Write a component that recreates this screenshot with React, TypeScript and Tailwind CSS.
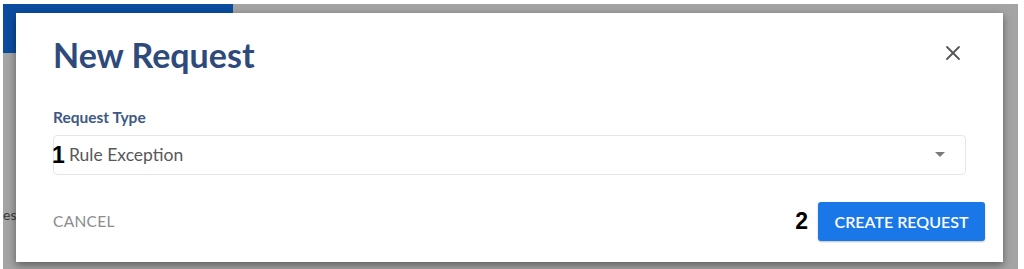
import React from "react";

const lato = { fontFamily: "Lato, 'Open Sans', sans-serif" };
const marker = { fontFamily: "'Liberation Sans', Arial, sans-serif" };

export default function App() {
  return (
    <div className="relative w-[1024px] h-[269px] bg-white pl-[3px] pt-[4px] pr-[6px] overflow-hidden" style={lato}>
      {/* page behind the modal */}
      <div className="flex h-full flex-col bg-[#a4a4a4]">
        <div className="h-[49px] w-[230px] bg-[#0b4ca0]" />
        <div className="mt-[154px] text-[14px] leading-[16px] text-[#3a3a3a]">est</div>
      </div>

      {/* modal */}
      <div className="absolute left-[16px] top-[13px] flex h-[249px] w-[987px] flex-col bg-white pl-[37px] pr-[18px] shadow-[0_3px_8px_rgba(0,0,0,0.45)]">
        <div className="flex items-start justify-between pt-[21px]">
          <h2 className="text-[34px] font-bold leading-[42px] text-[#2d4a7b]">New Request</h2>
          <button className="mr-[24px] mt-[11px] text-[#555]">
            <svg width="16" height="16" viewBox="0 0 16 16" fill="none" stroke="currentColor" strokeWidth="1.8" strokeLinecap="round">
              <path d="M2 2l12 12M14 2L2 14" />
            </svg>
          </button>
        </div>

        <label className="mt-[31px] text-[15.5px] font-bold leading-[20px] text-[#3e5883]">Request Type</label>
        <div className="relative mr-[19px] mt-[8px] flex h-[40px] items-center rounded-[4px] border border-[#e6e6e6] pl-[15px] pr-[20px]">
          <span className="absolute -left-[2px] top-[8px] text-[23px] font-black leading-[23px] text-black" style={marker}>1</span>
          <span className="flex-1 text-[17.5px] text-[#585858]">Rule Exception</span>
          <svg width="10" height="6" viewBox="0 0 10 6">
            <path d="M0 0h10L5 5z" fill="#7a7a7a" />
          </svg>
        </div>

        <div className="mt-[27px] flex items-center justify-between">
          <button className="text-[15.5px] tracking-[0.3px] text-[#8c8c8c]">CANCEL</button>
          <div className="flex items-center gap-[10px]">
            <span className="text-[23px] font-black leading-[23px] text-black" style={marker}>2</span>
            <button className="h-[39px] w-[167px] rounded-[3px] bg-[#1977e7] text-[16px] font-semibold text-white shadow-[0_1px_2px_rgba(0,0,0,0.25)]">
              CREATE REQUEST
            </button>
          </div>
        </div>
      </div>
    </div>
  );
}
